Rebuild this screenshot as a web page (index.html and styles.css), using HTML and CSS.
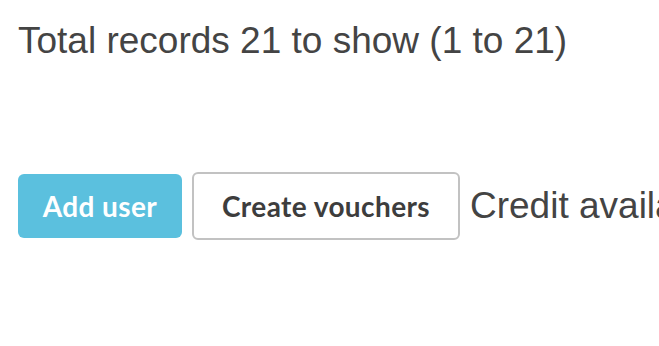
FILE: index.html
```html
<!DOCTYPE html>
<html lang="en">
<head>
    <meta charset="UTF-8">
    <meta name="viewport" content="width=device-width, initial-scale=1.0">
    <title>Users</title>
    <link rel="stylesheet" href="styles.css">
</head>
<body>
    <div class="container">
        <p class="records">Total records 21 to show (1 to 21)</p>
        <div class="actions">
            <button class="btn btn-info">Add user</button>
            <button class="btn btn-outline">Create vouchers</button>
            <span class="credit">Credit available: 0</span>
        </div>
    </div>
</body>
</html>
```

FILE: styles.css
```css
/* Base styles */
body {
    margin: 0;
    font-family: 'Liberation Sans', Arial, sans-serif;
    color: #444;
    background: #fff;
    overflow: hidden;
}

.container {
    padding: 20px 18px;
}

.records {
    margin: 0;
    font-size: 37px;
    white-space: nowrap;
}

.actions {
    display: flex;
    align-items: center;
    gap: 10px;
    margin-top: 110px;
    white-space: nowrap;
}

.btn {
    font-family: Lato, 'Open Sans', sans-serif;
    font-weight: 700;
    font-size: 28px;
    letter-spacing: 0.4px;
    border-radius: 6px;
    cursor: pointer;
    flex-shrink: 0;
    padding: 0;
}

.btn-info {
    background-color: #5bc0de;
    color: #fff;
    border: none;
    width: 164px;
    height: 64px;
}

.btn-outline {
    background-color: #fff;
    color: #3d3d3d;
    border: 2px solid #c2c2c2;
    width: 268px;
    height: 68px;
}

.credit {
    font-size: 37px;
}
```
